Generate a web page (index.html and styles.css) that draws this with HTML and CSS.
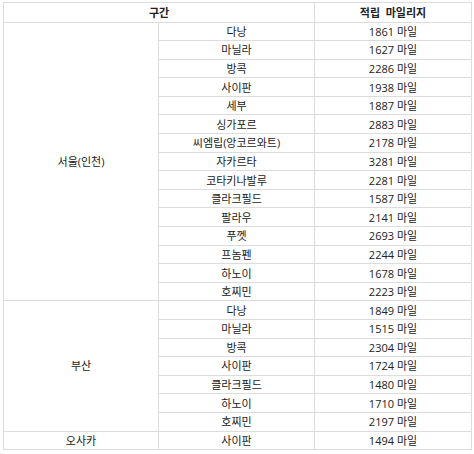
FILE: index.html
```html
<!DOCTYPE html>
<html lang="ko">
<head>
<meta charset="utf-8">
<link rel="stylesheet" href="styles.css">
</head>
<body>
<table class="miles">
<colgroup><col class="c1"><col class="c2"><col class="c3"></colgroup>
<thead>
<tr><th colspan="2">구간</th><th>적립 &nbsp;마일리지</th></tr>
</thead>
<tbody>
<tr><td rowspan="15">서울(인천)</td><td>다낭</td><td>1861 마일</td></tr>
<tr><td>마닐라</td><td>1627 마일</td></tr>
<tr><td>방콕</td><td>2286 마일</td></tr>
<tr><td>사이판</td><td>1938 마일</td></tr>
<tr><td>세부</td><td>1887 마일</td></tr>
<tr><td>싱가포르</td><td>2883 마일</td></tr>
<tr><td>씨엠립(앙코르와트)</td><td>2178 마일</td></tr>
<tr><td>자카르타</td><td>3281 마일</td></tr>
<tr><td>코타키나발루</td><td>2281 마일</td></tr>
<tr><td>클라크필드</td><td>1587 마일</td></tr>
<tr><td>팔라우</td><td>2141 마일</td></tr>
<tr><td>푸껫</td><td>2693 마일</td></tr>
<tr><td>프놈펜</td><td>2244 마일</td></tr>
<tr><td>하노이</td><td>1678 마일</td></tr>
<tr><td>호찌민</td><td>2223 마일</td></tr>
<tr><td rowspan="7">부산</td><td>다낭</td><td>1849 마일</td></tr>
<tr><td>마닐라</td><td>1515 마일</td></tr>
<tr><td>방콕</td><td>2304 마일</td></tr>
<tr><td>사이판</td><td>1724 마일</td></tr>
<tr><td>클라크필드</td><td>1480 마일</td></tr>
<tr><td>하노이</td><td>1710 마일</td></tr>
<tr><td>호찌민</td><td>2197 마일</td></tr>
<tr><td>오사카</td><td>사이판</td><td>1494 마일</td></tr>
</tbody>
</table>
</body>
</html>
```
FILE: styles.css
```css
html, body {
  margin: 0;
  padding: 0;
  background: #ffffff;
}
body {
  padding: 2px 0 0 3px;
  font-family: "Open Sans", "Noto Sans CJK KR", sans-serif;
  font-size: 11px;
  color: #222222;
}
.miles {
  border-collapse: collapse;
  table-layout: fixed;
  width: 468px;
}
.c1 { width: 155px; }
.c2 { width: 156px; }
.c3 { width: 157px; }
.miles th,
.miles td {
  border: 1px solid #dcdcdc;
  height: 17.6px;
  padding: 0;
  text-align: center;
  vertical-align: middle;
  line-height: 17px;
  white-space: nowrap;
}
.miles th {
  font-weight: bold;
  height: 18.5px;
}
```
